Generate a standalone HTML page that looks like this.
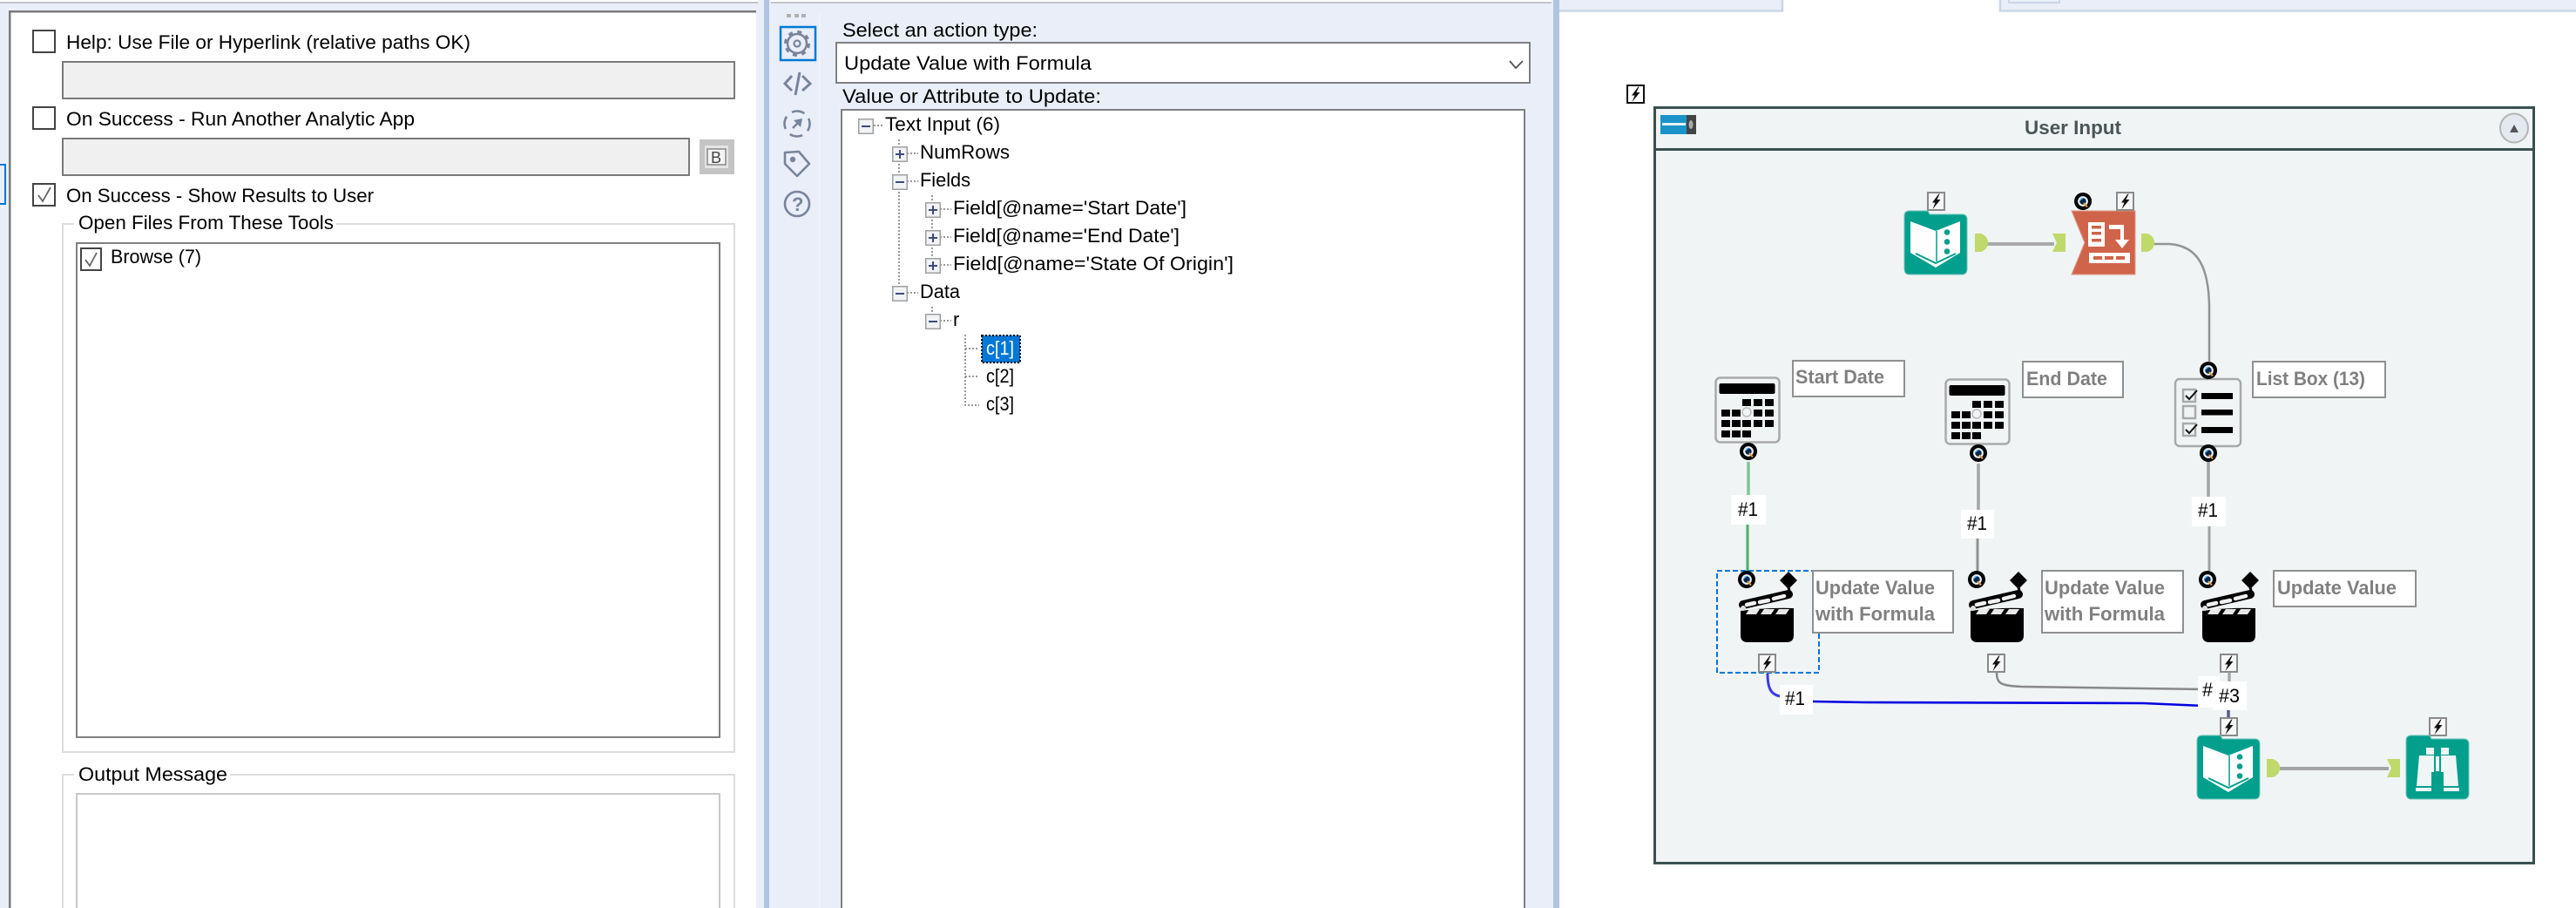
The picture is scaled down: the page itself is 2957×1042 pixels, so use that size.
<!DOCTYPE html>
<html><head><meta charset="utf-8"><style>
html,body{margin:0;padding:0;background:#fff;width:2957px;height:1042px;overflow:hidden}
svg{display:block}
text{font-family:"Liberation Sans",sans-serif;font-size:22px;fill:#000}
.lb{font-weight:bold;fill:#808080;font-size:22px}
</style></head><body>
<svg xmlns="http://www.w3.org/2000/svg" width="2957" height="1042" viewBox="0 0 2957 1042">
<defs>
<g id="bolt"><rect x="1" y="1" width="19" height="20" fill="#f6f6f6" stroke="#8a8a8a" stroke-width="2"/><path d="M13.500 2.500 L6 12.500 H9.500 L6.500 20 L15.500 9 H11.500 L14.500 2.500Z" fill="#111"/></g>
<g id="q"><circle r="10" fill="#000"/><circle r="4.800" fill="#05264a" stroke="#e8f2ff" stroke-width="2.200"/><path d="M-3 -1 A3.500 3.500 0 0 1 0 -3.500" fill="none" stroke="#5fb4ff" stroke-width="1.500"/><path d="M1 2 L5 6.500" stroke="#f0a030" stroke-width="2"/></g>
<path id="tealbase" d="M0 6 Q0 0 6 0 H27 L29 4 H66 Q72 4 72 10 V66 Q72 73 66 73 H6 Q0 73 0 66Z" fill="#029f8d" stroke="#6cc3b7" stroke-width="1"/>
<g id="book"><use href="#tealbase"/>
<path d="M7 12 L36 23 L64 12 V48 L36 65 L7 48Z" fill="#fff"/>
<path d="M13 49 L36 60 L59 49" fill="none" stroke="#029f8d" stroke-width="2"/>
<path d="M37 23 V58" stroke="#029f8d" stroke-width="1.500"/>
<circle cx="49" cy="24.500" r="3.300" fill="#029f8d"/><circle cx="49" cy="35.500" r="3.300" fill="#029f8d"/><circle cx="49" cy="46.500" r="3.300" fill="#029f8d"/></g>
<path id="aout" d="M0 0 H7 Q15 3 15 10.500 Q15 18 7 21 H0Z" fill="#bfd96b"/>
<path id="ain" d="M0 0 H15 V21 H0 L5 10.500Z" fill="#bfd96b"/>
<g id="cal"><rect x="1.500" y="1.500" width="73" height="74" rx="5" fill="#f1f4f5" stroke="#a9a9a9" stroke-width="2.500"/>
<rect x="5.500" y="8" width="64" height="12" rx="2" fill="#000"/>
<g fill="#000">
<rect x="32" y="26" width="10" height="8"/><rect x="45" y="26" width="10" height="8"/><rect x="58" y="26" width="10" height="8"/>
<rect x="8" y="38" width="10" height="8"/><rect x="20" y="38" width="10" height="8"/><rect x="45" y="38" width="10" height="8"/><rect x="58" y="38" width="10" height="8"/>
<rect x="8" y="50" width="10" height="8"/><rect x="20" y="50" width="10" height="8"/><rect x="32" y="50" width="10" height="8"/><rect x="45" y="50" width="10" height="8"/><rect x="58" y="50" width="10" height="8"/>
<rect x="8" y="62" width="10" height="8"/><rect x="20" y="62" width="10" height="8"/><rect x="32" y="62" width="10" height="8"/></g>
<circle cx="37" cy="41" r="5" fill="none" stroke="#bbb" stroke-width="1.500"/></g>
<g id="clap"><path d="M1998 701 Q2028 697 2059 698 V729 Q2059 737 2051 737 H2006 Q1998 737 1998 729Z" fill="#000"/>
<path d="M2004 705 L2008 699 H2020 L2016 705Z M2021 705 L2025 699 H2037 L2033 705Z M2038 705 L2042 699 H2054 L2050 705Z" fill="#e8e8e8"/>
<path d="M2001 694 L2053 682" stroke="#000" stroke-width="10" stroke-linecap="round"/>
<path d="M2005 694 L2014 692 M2020 691 L2030 689 M2036 687 L2048 684" stroke="#f2f2f2" stroke-width="4.500" stroke-linecap="round"/>
<path d="M2053 666 m-10 0 l10 -10 l10 10 l-10 10Z" fill="#000"/>
<path d="M2053 674 L2055 682" stroke="#000" stroke-width="3"/>
<circle cx="2001" cy="698" r="3" fill="#ddd"/></g>
<g id="plus"><rect x="0.750" y="0.750" width="16.500" height="16.500" fill="#f2f3f6" stroke="#a0a0a0" stroke-width="1.500"/><path d="M4 9 H14 M9 4 V14" stroke="#3b4a80" stroke-width="2"/></g>
<g id="minus"><rect x="0.750" y="0.750" width="16.500" height="16.500" fill="#f2f3f6" stroke="#a0a0a0" stroke-width="1.500"/><path d="M4 9 H14" stroke="#3b4a80" stroke-width="2"/></g>
</defs>

<!-- base -->
<rect x="0" y="0" width="1790" height="1042" fill="#e9eef9"/>
<rect x="0" y="0" width="870" height="3" fill="#fff"/><rect x="0" y="2" width="870" height="2" fill="#c4c4c4"/>
<rect x="885" y="0" width="896" height="3" fill="#fff"/><rect x="885" y="2" width="896" height="2" fill="#c4c4c4"/>

<!-- left panel -->
<rect x="10" y="12" width="858" height="1030" fill="#fff"/>
<rect x="10" y="12" width="858" height="2.500" fill="#7a7a7a"/>
<rect x="10" y="12" width="2.500" height="1030" fill="#7a7a7a"/>
<rect x="-3" y="189" width="9" height="45" fill="#e9eef9" stroke="#0078d7" stroke-width="2"/>
<rect x="877" y="0" width="6" height="1042" fill="#b0c4e4"/>
<rect x="1783" y="0" width="7" height="1042" fill="#b0c4e4"/>

<rect x="38" y="35" width="25" height="25" fill="#fff" stroke="#444" stroke-width="2"/>
<text x="76" y="56" textLength="464" lengthAdjust="spacingAndGlyphs">Help: Use File or Hyperlink (relative paths OK)</text>
<rect x="72" y="71" width="771" height="42" fill="#f0f0f0" stroke="#7a7a7a" stroke-width="2"/>
<rect x="38" y="123" width="25" height="25" fill="#fff" stroke="#444" stroke-width="2"/>
<text x="76" y="144" textLength="400" lengthAdjust="spacingAndGlyphs">On Success - Run Another Analytic App</text>
<rect x="72" y="159" width="719" height="42" fill="#f0f0f0" stroke="#7a7a7a" stroke-width="2"/>
<rect x="803" y="160" width="40" height="40" fill="#c4c4c4"/>
<rect x="809" y="167" width="27" height="26" fill="#e4e4e4"/><rect x="812" y="171" width="21" height="18" fill="#f4f4f4" stroke="#888" stroke-width="1.500"/>
<text x="816" y="187" style="font-size:18px;fill:#444">B</text>
<rect x="38" y="211" width="25" height="25" fill="#fff" stroke="#444" stroke-width="2"/>
<path d="M44 224 L49 231 L58 215" fill="none" stroke="#666" stroke-width="1.800"/>
<text x="76" y="232" textLength="353" lengthAdjust="spacingAndGlyphs">On Success - Show Results to User</text>

<rect x="72" y="257" width="771" height="606" fill="none" stroke="#dcdcdc" stroke-width="2"/>
<rect x="85" y="250" width="301" height="14" fill="#fff"/>
<text x="90" y="263" textLength="293" lengthAdjust="spacingAndGlyphs">Open Files From These Tools</text>
<rect x="88" y="279" width="738" height="567" fill="#fff" stroke="#808080" stroke-width="2"/>
<rect x="93" y="285" width="23" height="25" fill="#fff" stroke="#444" stroke-width="2"/>
<path d="M98 298 L103 305 L111 290" fill="none" stroke="#666" stroke-width="1.800"/>
<text x="127" y="302" textLength="104" lengthAdjust="spacingAndGlyphs">Browse (7)</text>

<rect x="72" y="889" width="771" height="170" fill="none" stroke="#dcdcdc" stroke-width="2"/>
<rect x="85" y="882" width="179" height="14" fill="#fff"/>
<text x="90" y="896" textLength="171" lengthAdjust="spacingAndGlyphs">Output Message</text>
<rect x="88" y="911" width="738" height="150" fill="#fff" stroke="#c8c8c8" stroke-width="2"/>

<!-- sidebar -->
<rect x="940" y="14" width="1.500" height="1028" fill="#f1f4fb"/>
<g fill="#b0b0b0"><rect x="903" y="16" width="5" height="4"/><rect x="912" y="16" width="5" height="4"/><rect x="920" y="16" width="5" height="4"/></g>
<rect x="896" y="31" width="40" height="38" fill="none" stroke="#0078d7" stroke-width="2.500"/>
<g fill="none" stroke="#77849b">
<circle cx="915" cy="50" r="11" stroke-width="2.500"/>
<circle cx="915" cy="50" r="13.500" stroke-width="3" stroke-dasharray="5 5.600"/>
<circle cx="915" cy="50" r="3.500" stroke-width="2.200"/>
<path d="M909 87 L901 96 L909 104 M921 87 L930 96 L921 104 M918 83 L913 109" stroke-width="3"/>
<circle cx="915" cy="142" r="14.500" stroke-width="2.600" stroke-dasharray="15 7.800" transform="rotate(-25 915 142)"/>
<path d="M910 147 L919 138" stroke-width="2.600"/>
<path d="M901 175 L917 174 L929 188 L915 202 L901 188Z" stroke-width="2.600" stroke-linejoin="round"/>
<circle cx="915" cy="234" r="14" stroke-width="2.600"/>
</g>
<path d="M911 138 L921 136 L919 146Z" fill="#77849b"/>
<circle cx="910" cy="183" r="3.200" fill="#77849b"/>
<text x="909" y="242" style="font-size:22px;font-weight:bold;fill:#77849b">?</text>

<!-- action panel -->
<text x="967" y="42" textLength="224" lengthAdjust="spacingAndGlyphs">Select an action type:</text>
<rect x="960" y="49" width="796" height="46" fill="#fff" stroke="#808080" stroke-width="2"/>
<text x="969" y="80" textLength="284" lengthAdjust="spacingAndGlyphs">Update Value with Formula</text>
<path d="M1733 70 L1740 78 L1748 70" fill="none" stroke="#555" stroke-width="1.800"/>
<text x="967" y="118" textLength="297" lengthAdjust="spacingAndGlyphs">Value or Attribute to Update:</text>
<rect x="966" y="126" width="784" height="930" fill="#fff" stroke="#808080" stroke-width="2"/>

<g fill="none" stroke="#777" stroke-width="1.500" stroke-dasharray="2 2">
<path d="M1003 144 H1014 M1032 160 V333 M1041 176 H1054 M1041 208 H1054 M1041 336 H1054 M1070 224 V306 M1079 240 H1092 M1079 272 H1092 M1079 304 H1092 M1070 352 V360 M1079 368 H1092 M1108 384 V465 H1124 M1108 400 H1124 M1108 432 H1124"/>
</g>
<use href="#minus" x="985" y="136"/>
<use href="#plus" x="1024" y="168"/>
<use href="#minus" x="1024" y="200"/>
<use href="#plus" x="1062" y="232"/>
<use href="#plus" x="1062" y="264"/>
<use href="#plus" x="1062" y="296"/>
<use href="#minus" x="1024" y="328"/>
<use href="#minus" x="1062" y="360"/>
<text x="1016" y="150" textLength="132" lengthAdjust="spacingAndGlyphs">Text Input (6)</text>
<text x="1056" y="182" textLength="103" lengthAdjust="spacingAndGlyphs">NumRows</text>
<text x="1056" y="214" textLength="58" lengthAdjust="spacingAndGlyphs">Fields</text>
<text x="1094" y="246" textLength="268" lengthAdjust="spacingAndGlyphs">Field[@name='Start Date']</text>
<text x="1094" y="278" textLength="260" lengthAdjust="spacingAndGlyphs">Field[@name='End Date']</text>
<text x="1094" y="310" textLength="322" lengthAdjust="spacingAndGlyphs">Field[@name='State Of Origin']</text>
<text x="1056" y="342" textLength="46" lengthAdjust="spacingAndGlyphs">Data</text>
<text x="1094" y="374">r</text>
<rect x="1127" y="385" width="44" height="31" fill="#0078d7" stroke="#000" stroke-width="2" stroke-dasharray="2 2"/>
<text x="1132" y="407" textLength="32" lengthAdjust="spacingAndGlyphs" style="fill:#fff">c[1]</text>
<text x="1132" y="439" textLength="32" lengthAdjust="spacingAndGlyphs">c[2]</text>
<text x="1132" y="471" textLength="32" lengthAdjust="spacingAndGlyphs">c[3]</text>

<!-- tabs -->
<rect x="1790" y="0" width="256" height="13" fill="#e9eef9"/>
<path d="M1790 12.500 H2046 V0" fill="none" stroke="#cbd5e8" stroke-width="2.500"/>
<rect x="2296" y="0" width="661" height="13" fill="#e9eef9"/>
<path d="M2296 0 V12.500 H2957" fill="none" stroke="#cbd5e8" stroke-width="2.500"/>
<path d="M2306 0 V3 H2364 V0" fill="none" stroke="#cbd5e8" stroke-width="2"/>

<!-- canvas -->
<g transform="translate(1867 97)"><rect x="1" y="1" width="19" height="20" fill="#fff" stroke="#111" stroke-width="2"/><path d="M13.500 2.500 L6 12.500 H9.500 L6.500 20 L15.500 9 H11.500 L14.500 2.500Z" fill="#111"/></g>
<rect x="1899.500" y="123.500" width="1009" height="867" fill="#f0f4f5" stroke="#3a5050" stroke-width="3"/>
<rect x="1899" y="170" width="1010" height="3" fill="#3a5050"/>
<text x="2324" y="154" textLength="111" lengthAdjust="spacingAndGlyphs" style="font-weight:bold;fill:#4a5656">User Input</text>
<rect x="1906" y="132" width="31" height="22" fill="#1a93c9"/><rect x="1936" y="132" width="11" height="22" fill="#444"/>
<rect x="1908" y="141" width="27" height="3" fill="#e4f0f6"/><ellipse cx="1941" cy="143" rx="2.500" ry="5" fill="#aaa"/>
<ellipse cx="2886" cy="147" rx="16" ry="16.500" fill="#e4e9f0" stroke="#b4b4b4" stroke-width="2"/>
<path d="M2881 152 L2886 143 L2891 152Z" fill="#555"/>

<!-- connectors -->
<path d="M2281 280 H2358" stroke="#a8a8a8" stroke-width="4"/>
<path d="M2473 280 H2490 C2525 282 2535 310 2536 350 V415" fill="none" stroke="#939393" stroke-width="2.500"/>
<path d="M2007 530 V568" stroke="#7fc496" stroke-width="3.500"/>
<path d="M2006 602 V657" stroke="#4cae6c" stroke-width="3"/>
<path d="M2271 532 V585" stroke="#a4a4a4" stroke-width="3.500"/>
<path d="M2270 618 V657" stroke="#909090" stroke-width="3"/>
<path d="M2535 530 V570" stroke="#a4a4a4" stroke-width="3.500"/>
<path d="M2536 604 V655" stroke="#a0a0a0" stroke-width="3"/>
<path d="M2029 773 C2029 790 2033 797 2043 799" fill="none" stroke="#3a3ae8" stroke-width="3"/>
<path d="M2081 805 L2140 806 L2460 807 L2530 810" fill="none" stroke="#0000e0" stroke-width="2.600"/>
<path d="M2292 772 C2292 785 2298 787 2320 788 L2530 791" fill="none" stroke="#888" stroke-width="2.500"/>
<path d="M2559 772 V784" stroke="#a8a8a8" stroke-width="3.500"/>
<path d="M2558 813 V824" stroke="#5a5a90" stroke-width="3.500"/>
<path d="M2617 882 H2742" stroke="#a4a4a4" stroke-width="4"/>

<!-- top tools -->
<use href="#bolt" x="2212" y="220"/>
<use href="#book" x="2186" y="242"/>
<use href="#aout" x="2267" y="268"/>
<use href="#ain" x="2356" y="268"/>
<path d="M2378 242 H2451 V315 H2378 L2393 278.500Z" fill="#d0644a" stroke="#e19a88" stroke-width="1"/>
<g fill="#fff">
<rect x="2397" y="255" width="19" height="28"/>
<rect x="2398" y="290" width="47" height="12"/>
<path d="M2421 258 H2438 V275 H2444 L2436 285 L2428 275 H2434 V263 H2421Z"/>
</g>
<g fill="#d0644a"><rect x="2401" y="259" width="11" height="3.500"/><rect x="2401" y="266" width="11" height="3.500"/><rect x="2401" y="274" width="11" height="3.500"/>
<rect x="2403" y="294" width="10" height="4"/><rect x="2416" y="294" width="10" height="4"/><rect x="2429" y="294" width="10" height="4"/></g>
<use href="#q" x="2391" y="231"/>
<use href="#bolt" x="2429" y="220"/>
<use href="#aout" x="2458" y="268"/>

<!-- interface tools -->
<use href="#cal" x="1968" y="432"/>
<use href="#q" x="2007" y="518"/>
<use href="#cal" x="2232" y="434"/>
<use href="#q" x="2271" y="520"/>
<rect x="2497" y="435" width="75" height="77" rx="5" fill="#f1f4f5" stroke="#a9a9a9" stroke-width="2.500"/>
<g fill="#f1f4f5" stroke="#a9a9a9" stroke-width="2.500"><rect x="2506" y="447" width="14" height="14"/><rect x="2506" y="466" width="14" height="14"/><rect x="2506" y="486" width="14" height="14"/></g>
<path d="M2509 454 L2513 458 L2522 448 M2509 493 L2513 497 L2522 487" fill="none" stroke="#111" stroke-width="2"/>
<g fill="#000"><rect x="2527" y="451" width="36" height="7"/><rect x="2527" y="470" width="36" height="6.500"/><rect x="2527" y="490" width="36" height="7"/></g>
<use href="#q" x="2535" y="425"/>
<use href="#q" x="2535" y="520"/>

<!-- labels row 1 -->
<rect x="2058" y="414" width="128" height="41" fill="#fff" stroke="#909090" stroke-width="2"/>
<text class="lb" x="2061" y="440" textLength="102" lengthAdjust="spacingAndGlyphs">Start Date</text>
<rect x="2322" y="415" width="115" height="41" fill="#fff" stroke="#909090" stroke-width="2"/>
<text class="lb" x="2326" y="442" textLength="93" lengthAdjust="spacingAndGlyphs">End Date</text>
<rect x="2586" y="415" width="152" height="41" fill="#fff" stroke="#909090" stroke-width="2"/>
<text class="lb" x="2590" y="442" textLength="125" lengthAdjust="spacingAndGlyphs">List Box (13)</text>

<!-- #1 boxes -->
<rect x="1987" y="568" width="40" height="34" fill="#fff"/><text x="1995" y="592" textLength="23" lengthAdjust="spacingAndGlyphs">#1</text>
<rect x="2251" y="585" width="38" height="33" fill="#fff"/><text x="2258" y="608" textLength="23" lengthAdjust="spacingAndGlyphs">#1</text>
<rect x="2516" y="570" width="39" height="34" fill="#fff"/><text x="2523" y="593" textLength="23" lengthAdjust="spacingAndGlyphs">#1</text>

<!-- update tools -->
<rect x="1971" y="655" width="117" height="117" fill="none" stroke="#0078d7" stroke-width="2" stroke-dasharray="6 3"/>
<use href="#clap"/>
<use href="#clap" x="264"/>
<use href="#clap" x="530"/>
<use href="#q" x="2005" y="665"/><use href="#q" x="2269" y="665"/><use href="#q" x="2534" y="665"/>

<rect x="2081" y="655" width="161" height="71" fill="#fff" stroke="#909090" stroke-width="2"/>
<text class="lb" x="2084" y="682" textLength="137" lengthAdjust="spacingAndGlyphs">Update Value</text>
<text class="lb" x="2084" y="712" textLength="137" lengthAdjust="spacingAndGlyphs">with Formula</text>
<rect x="2344" y="655" width="162" height="71" fill="#fff" stroke="#909090" stroke-width="2"/>
<text class="lb" x="2347" y="682" textLength="138" lengthAdjust="spacingAndGlyphs">Update Value</text>
<text class="lb" x="2347" y="712" textLength="138" lengthAdjust="spacingAndGlyphs">with Formula</text>
<rect x="2610" y="655" width="163" height="41" fill="#fff" stroke="#909090" stroke-width="2"/>
<text class="lb" x="2614" y="682" textLength="137" lengthAdjust="spacingAndGlyphs">Update Value</text>

<use href="#bolt" x="2018" y="750"/>
<use href="#bolt" x="2281" y="750"/>
<use href="#bolt" x="2548" y="750"/>

<rect x="2043" y="786" width="38" height="34" fill="#fff"/><text x="2049" y="809" textLength="23" lengthAdjust="spacingAndGlyphs">#1</text>
<rect x="2523" y="776" width="25" height="36" fill="#fff"/><text x="2528" y="799" textLength="12" lengthAdjust="spacingAndGlyphs">#</text>
<rect x="2540" y="782" width="39" height="33" fill="#fff"/><text x="2547" y="806" textLength="24" lengthAdjust="spacingAndGlyphs">#3</text>

<!-- bottom tools -->
<use href="#bolt" x="2548" y="823"/>
<use href="#book" x="2522" y="844"/>
<use href="#aout" x="2602" y="871"/>
<use href="#ain" x="2740" y="871"/>
<use href="#bolt" x="2788" y="823"/>
<use href="#tealbase" x="2762" y="844"/>
<g transform="translate(2762 844)" fill="#eef7f5">
<rect x="23" y="14" width="9" height="8"/><rect x="40" y="14" width="9" height="8"/>
<path d="M15 23 H32 V42 H29 V58 H12 Z"/><path d="M57 23 H40 V42 H43 V58 H60 Z"/>
<rect x="11" y="60" width="18" height="4"/><rect x="43" y="60" width="18" height="4"/>
<rect x="34" y="24" width="4" height="17"/>
</g>
</svg>
</body></html>
